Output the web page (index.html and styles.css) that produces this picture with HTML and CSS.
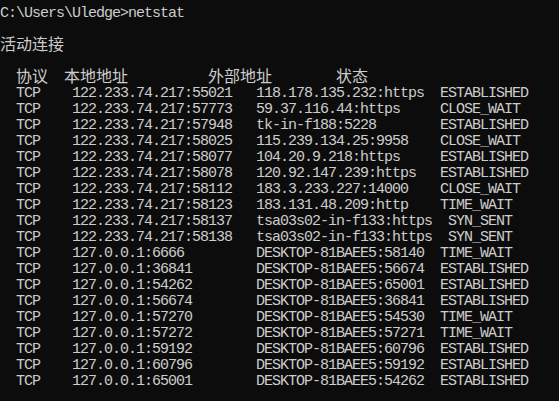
FILE: index.html
```html
<!DOCTYPE html>
<html lang="zh-CN">
<head>
<meta charset="utf-8">
<title>netstat</title>
<link rel="stylesheet" href="styles.css">
</head>
<body>
<div class="console">
<div class="line">C:\Users\Uledge&gt;netstat</div>
<div class="line"></div>
<div class="line"><span class="cjk">活动连接</span></div>
<div class="line"></div>
<div class="line">  <span class="cjk">协议</span>  <span class="cjk">本地地址</span>          <span class="cjk">外部地址</span>        <span class="cjk">状态</span></div>
<div class="line">  TCP    122.233.74.217:55021   118.178.135.232:https  ESTABLISHED</div>
<div class="line">  TCP    122.233.74.217:57773   59.37.116.44:https     CLOSE_WAIT</div>
<div class="line">  TCP    122.233.74.217:57948   tk-in-f188:5228        ESTABLISHED</div>
<div class="line">  TCP    122.233.74.217:58025   115.239.134.25:9958    CLOSE_WAIT</div>
<div class="line">  TCP    122.233.74.217:58077   104.20.9.218:https     ESTABLISHED</div>
<div class="line">  TCP    122.233.74.217:58078   120.92.147.239:https   ESTABLISHED</div>
<div class="line">  TCP    122.233.74.217:58112   183.3.233.227:14000    CLOSE_WAIT</div>
<div class="line">  TCP    122.233.74.217:58123   183.131.48.209:http    TIME_WAIT</div>
<div class="line">  TCP    122.233.74.217:58137   tsa03s02-in-f133:https  SYN_SENT</div>
<div class="line">  TCP    122.233.74.217:58138   tsa03s02-in-f133:https  SYN_SENT</div>
<div class="line">  TCP    127.0.0.1:6666         DESKTOP-81BAEE5:58140  TIME_WAIT</div>
<div class="line">  TCP    127.0.0.1:36841        DESKTOP-81BAEE5:56674  ESTABLISHED</div>
<div class="line">  TCP    127.0.0.1:54262        DESKTOP-81BAEE5:65001  ESTABLISHED</div>
<div class="line">  TCP    127.0.0.1:56674        DESKTOP-81BAEE5:36841  ESTABLISHED</div>
<div class="line">  TCP    127.0.0.1:57270        DESKTOP-81BAEE5:54530  TIME_WAIT</div>
<div class="line">  TCP    127.0.0.1:57272        DESKTOP-81BAEE5:57271  TIME_WAIT</div>
<div class="line">  TCP    127.0.0.1:59192        DESKTOP-81BAEE5:60796  ESTABLISHED</div>
<div class="line">  TCP    127.0.0.1:60796        DESKTOP-81BAEE5:59192  ESTABLISHED</div>
<div class="line">  TCP    127.0.0.1:65001        DESKTOP-81BAEE5:54262  ESTABLISHED</div>
</div>
</body>
</html>
```

FILE: styles.css
```css
html, body {
  margin: 0;
  padding: 0;
  background: #0c0c0c;
}

body {
  width: 559px;
  height: 401px;
  overflow: hidden;
}

.console {
  padding-top: 6px;
  color: #cccccc;
  font-family: "Liberation Mono", "DejaVu Sans Mono", monospace;
  font-size: 15px;
  letter-spacing: -1px;
  line-height: 16px;
}

.line {
  height: 16px;
  white-space: pre;
}

.cjk {
  font-family: "Noto Sans CJK SC", sans-serif;
  font-size: 16px;
  letter-spacing: 0;
  line-height: 10px;
}
```
